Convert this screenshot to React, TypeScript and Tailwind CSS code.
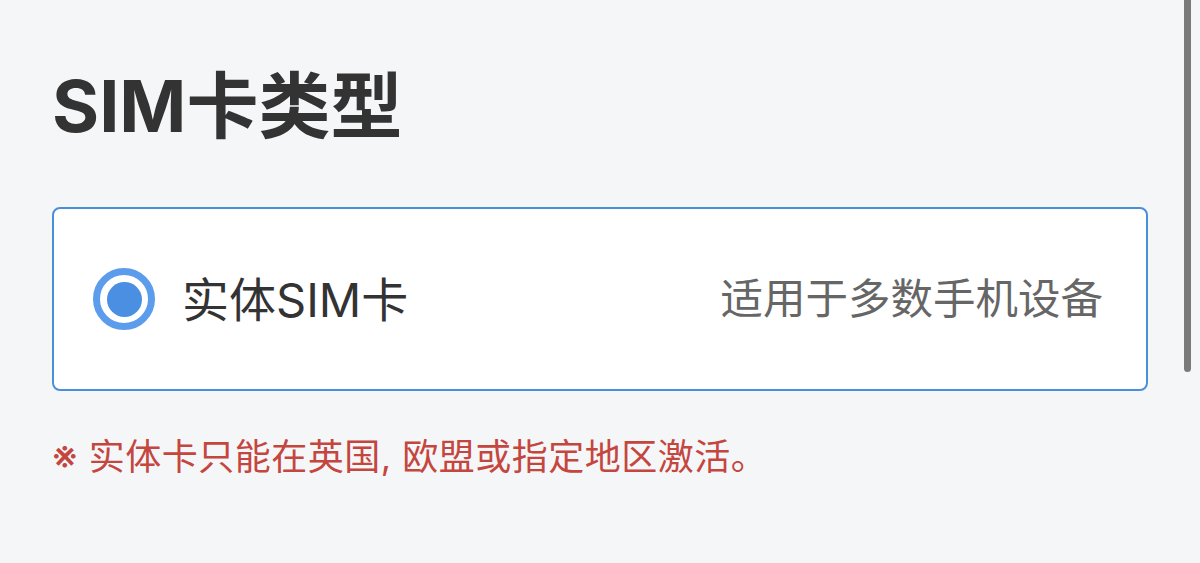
import React from 'react';

const FONT = "font-['Inter','Noto_Sans_CJK_SC',sans-serif]";

function RadioDot() {
  return (
    <span className="flex h-[62px] w-[62px] shrink-0 items-center justify-center rounded-full border-[7px] border-[#5c9cec] bg-white">
      <span className="h-[35px] w-[35px] rounded-full bg-[#4a8fe2]" />
    </span>
  );
}

export default function App() {
  return (
    <div className={`relative h-[563px] w-full overflow-hidden bg-[#f5f6f8] ${FONT}`}>
      <div className="px-[52px] pt-[63px]">
        <h1 className="text-[72px] font-bold leading-[86px] text-[#333333]">SIM卡类型</h1>

        <div className="mt-[58px] flex h-[184px] items-center justify-between rounded-[8px] border-2 border-[#4a8fd9] bg-white pl-[39px] pr-[43px]">
          <div className="flex items-center gap-[27px]">
            <RadioDot />
            <span className="text-[47px] leading-none text-[#333333]">实体SIM卡</span>
          </div>
          <span className="text-[42.5px] leading-none text-[#666666]">适用于多数手机设备</span>
        </div>

        <p className="mt-[40px] text-[36px] leading-[50px] tracking-[0.5px] text-[#c4463e]">
          <span className="text-[40px]">※</span> 实体卡只能在英国, 欧盟或指定地区激活。
        </p>
      </div>

      {/* scroll indicator */}
      <div className="absolute right-[9px] top-0 h-[372px] w-[7px] rounded-b-full bg-[#7a7a7a]" />
    </div>
  );
}
